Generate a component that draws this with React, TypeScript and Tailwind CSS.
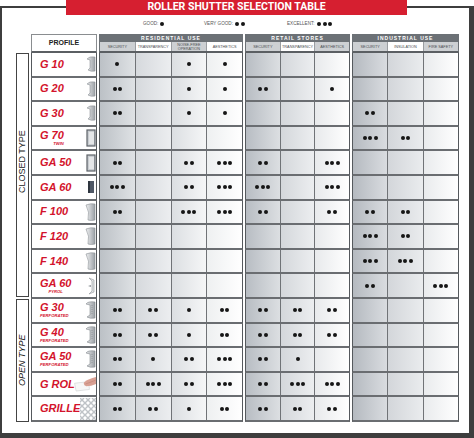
import React from 'react';

type Icon = 'slat' | 'box' | 'dark' | 'tall' | 'pyrol' | 'perf' | 'hand' | 'grille';

type Row = {
  name: string;
  sub?: string;
  subAlign?: 'left' | 'center' | 'right';
  icon: Icon;
  dots: number[];
};

const closedRows: Row[] = [
  { name: 'G 10', icon: 'slat', dots: [1, 0, 1, 1, 0, 0, 0, 0, 0, 0] },
  { name: 'G 20', icon: 'slat', dots: [2, 0, 1, 1, 2, 0, 1, 0, 0, 0] },
  { name: 'G 30', icon: 'slat', dots: [2, 0, 1, 1, 0, 0, 0, 2, 0, 0] },
  { name: 'G 70', sub: 'TWIN', subAlign: 'right', icon: 'box', dots: [0, 0, 0, 0, 0, 0, 0, 3, 2, 0] },
  { name: 'GA 50', icon: 'box', dots: [2, 0, 2, 3, 2, 0, 3, 0, 0, 0] },
  { name: 'GA 60', icon: 'dark', dots: [3, 0, 2, 3, 3, 0, 3, 0, 0, 0] },
  { name: 'F 100', icon: 'tall', dots: [2, 0, 3, 3, 2, 0, 2, 2, 2, 0] },
  { name: 'F 120', icon: 'tall', dots: [0, 0, 0, 0, 0, 0, 0, 3, 2, 0] },
  { name: 'F 140', icon: 'tall', dots: [0, 0, 0, 0, 0, 0, 0, 3, 3, 0] },
  { name: 'GA 60', sub: 'PYROL', subAlign: 'center', icon: 'pyrol', dots: [0, 0, 0, 0, 0, 0, 0, 2, 0, 3] },
];

const openRows: Row[] = [
  { name: 'G 30', sub: 'PERFORATED', subAlign: 'left', icon: 'perf', dots: [2, 2, 1, 2, 2, 2, 2, 0, 0, 0] },
  { name: 'G 40', sub: 'PERFORATED', subAlign: 'left', icon: 'perf', dots: [2, 2, 1, 2, 2, 2, 2, 0, 0, 0] },
  { name: 'GA 50', sub: 'PERFORATED', subAlign: 'left', icon: 'perf', dots: [2, 1, 2, 3, 2, 1, 0, 0, 0, 0] },
  { name: 'G ROL', icon: 'hand', dots: [2, 3, 2, 3, 2, 3, 3, 0, 0, 0] },
  { name: 'GRILLE', icon: 'grille', dots: [2, 2, 1, 2, 2, 2, 2, 0, 0, 0] },
];

const allRows = [...closedRows, ...openRows];

const groups = [
  {
    title: 'RESIDENTIAL USE',
    width: 'w-[144px]',
    start: 0,
    cols: ['SECURITY', 'TRANSPARENCY', 'NOISE-FREE OPERATION', 'AESTHETICS'],
    shades: [
      'bg-linear-to-r from-[#bcc1c6] to-[#dfe2e5]',
      'bg-linear-to-r from-[#d6d9dd] to-[#eceef0]',
      'bg-linear-to-r from-[#dcdfe2] to-[#f5f6f7]',
      'bg-linear-to-r from-[#eef0f1] to-white',
    ],
  },
  {
    title: 'RETAIL STORES',
    width: 'w-[105px]',
    start: 4,
    cols: ['SECURITY', 'TRANSPARENCY', 'AESTHETICS'],
    shades: [
      'bg-linear-to-r from-[#b8bdc3] to-[#dcdfe2]',
      'bg-linear-to-r from-[#d4d7db] to-[#eceef0]',
      'bg-linear-to-r from-[#e8eaec] to-white',
    ],
  },
  {
    title: 'INDUSTRIAL USE',
    width: 'w-[107px]',
    start: 7,
    cols: ['SECURITY', 'INSULATION', 'FIRE SAFETY'],
    shades: [
      'bg-linear-to-r from-[#b5bac0] to-[#d9dce0]',
      'bg-linear-to-r from-[#d3d6da] to-[#eaecee]',
      'bg-linear-to-r from-[#e9ebed] to-white',
    ],
  },
];

const subheadBg = ['bg-[#cdd0d3]', 'bg-white', 'bg-[#cdd0d3]', 'bg-white'];

function Dots({ count }: { count: number }) {
  return (
    <>
      {Array.from({ length: count }).map((_, i) => (
        <span key={i} className="block h-[4px] w-[4px] rounded-full bg-[#161616]" />
      ))}
    </>
  );
}

function ProfileIcon({ kind }: { kind: Icon }) {
  if (kind === 'grille') {
    const steps = [-24, -18, -12, -6, 0, 6, 12, 18, 24];
    return (
      <svg width="22" height="22" viewBox="0 0 22 22" className="shrink-0">
        {steps.map((k) => (
          <g key={k}>
            <line x1={k} y1={0} x2={k + 22} y2={22} stroke="#bfc3c7" strokeWidth="1.4" />
            <line x1={k + 22} y1={0} x2={k} y2={22} stroke="#bfc3c7" strokeWidth="1.4" />
          </g>
        ))}
      </svg>
    );
  }
  if (kind === 'hand') {
    return (
      <svg width="25" height="18" viewBox="0 0 32 20" className="-ml-[2px] shrink-0">
        <path d="M2 9 L20 7 L21 17 L4 19 Z" fill="#f7f7f7" stroke="#c8cbce" strokeWidth="0.7" />
        <path d="M14 8 Q20 3 30 1 L31 9 Q24 13 17 13 Q13 12 14 8 Z" fill="#d9a093" />
        <path d="M16 10 Q22 8 29 5" stroke="#b97a6e" strokeWidth="0.6" fill="none" />
      </svg>
    );
  }
  if (kind === 'dark') {
    return (
      <svg width="10" height="14" viewBox="0 0 10 14" className="shrink-0">
        <rect x="2" y="1" width="6" height="12" fill="#4f5866" />
        <rect x="2" y="1" width="2" height="12" fill="#2f3640" />
      </svg>
    );
  }
  if (kind === 'box') {
    return (
      <svg width="11" height="18" viewBox="0 0 11 18" className="shrink-0">
        <rect x="2" y="1" width="8" height="16" fill="#c9cdd1" stroke="#5d6268" strokeWidth="1.2" />
        <rect x="4" y="3" width="5" height="12" fill="#e4e6e8" />
      </svg>
    );
  }
  if (kind === 'tall') {
    return (
      <svg width="11" height="18" viewBox="0 0 11 18" className="shrink-0">
        <defs>
          <linearGradient id="tallG" x1="0" x2="1">
            <stop offset="0" stopColor="#f0f1f2" />
            <stop offset="1" stopColor="#9aa0a6" />
          </linearGradient>
        </defs>
        <path d="M1 2 Q6 0 10 1 L10 17 Q6 18 3 17 Q5 9 1 2 Z" fill="url(#tallG)" stroke="#8c9196" strokeWidth="0.6" />
      </svg>
    );
  }
  if (kind === 'pyrol') {
    return (
      <svg width="10" height="18" viewBox="0 0 10 18" className="shrink-0">
        <path d="M3 1 L6 4 L6 14 L3 17 L8 15 L8 3 Z" fill="#e3e5e7" stroke="#8e9398" strokeWidth="0.6" />
        <path d="M2 9 L5 8 L5 10 Z" fill="#8e9398" />
      </svg>
    );
  }
  if (kind === 'perf') {
    return (
      <svg width="11" height="18" viewBox="0 0 11 18" className="shrink-0">
        <defs>
          <linearGradient id="perfG" x1="0" x2="1">
            <stop offset="0" stopColor="#e4e6e8" />
            <stop offset="1" stopColor="#9ba0a5" />
          </linearGradient>
        </defs>
        <path d="M1 3 Q3 0 10 1 L10 17 Q5 18 2 16 L5 14 L5 4 Z" fill="url(#perfG)" stroke="#858a8f" strokeWidth="0.6" />
        <line x1="7" y1="4" x2="7" y2="14" stroke="#7b8085" strokeWidth="0.6" strokeDasharray="1 1" />
      </svg>
    );
  }
  return (
    <svg width="10" height="16" viewBox="0 0 10 16" className="shrink-0">
      <defs>
        <linearGradient id="slatG" x1="0" x2="1">
          <stop offset="0" stopColor="#e6e8ea" />
          <stop offset="1" stopColor="#9ca1a6" />
        </linearGradient>
      </defs>
      <path d="M1 3 Q3 0 9 1 L9 15 Q5 16 2 14 L4 12 L4 4 Z" fill="url(#slatG)" stroke="#8d9297" strokeWidth="0.6" />
    </svg>
  );
}

function ProfileCell({ row }: { row: Row }) {
  const align =
    row.subAlign === 'right' ? 'self-end' : row.subAlign === 'center' ? 'self-center' : 'self-start';
  return (
    <div className="flex h-[24.6px] items-center justify-between overflow-hidden border-x border-b-2 border-x-[#55595d] border-b-[#6a6d71] bg-white pl-[8px]">
      <div className="flex shrink-0 flex-col">
        <span className="whitespace-nowrap text-[11px] font-bold italic leading-[11px] text-[#d3132c]">{row.name}</span>
        {row.sub ? (
          <span className={`${align} text-[4.2px] font-bold italic leading-[5px] text-[#d3132c]`}>{row.sub}</span>
        ) : null}
      </div>
      <ProfileIcon kind={row.icon} />
    </div>
  );
}

function GroupColumn({ group }: { group: (typeof groups)[number] }) {
  const last = group.cols.length - 1;
  return (
    <div className={`ml-[2px] flex flex-col ${group.width}`}>
      <div className="flex h-[8px] items-center justify-center bg-[#6c7176] text-[5px] font-bold leading-none tracking-[1px] text-white">
        {group.title}
      </div>
      <div className="flex h-[11px] border-x border-b-2 border-x-[#6c7176] border-b-[#5b5f63]">
        {group.cols.map((col, i) => (
          <div
            key={col}
            className={`flex flex-1 items-center justify-center text-center text-[3.8px] leading-[4px] text-[#4a4d50] ${subheadBg[i]} ${
              i < last ? 'border-r border-[#9a9da1]' : ''
            }`}
          >
            {col === 'NOISE-FREE OPERATION' ? (
              <span>
                NOISE-FREE
                <br />
                OPERATION
              </span>
            ) : (
              col
            )}
          </div>
        ))}
      </div>
      {allRows.map((row, r) => (
        <div
          key={r}
          className="flex h-[24.6px] border-x border-b-2 border-x-[#55595d] border-b-[#6a6d71]"
        >
          {group.cols.map((col, i) => (
            <div
              key={col}
              className={`flex flex-1 items-center justify-center gap-[1.5px] ${group.shades[i]} ${
                i < last ? 'border-r border-[#707377]' : ''
              }`}
            >
              <Dots count={row.dots[group.start + i]} />
            </div>
          ))}
        </div>
      ))}
    </div>
  );
}

export default function App() {
  return (
    <div className="relative h-[438px] w-[474px] overflow-hidden bg-white font-['Liberation_Sans',Arial,sans-serif]">
      <div className="mt-[6px] h-[432px] border-b-[5px] border-l-2 border-r-[5px] border-t-2 border-[#3e3e3e] pl-[14px]">
        <div className="mb-[6px] mt-[12px] flex h-[8px] items-center pl-[127px] text-[4.6px] text-[#555]">
          <div className="flex w-[61px] items-center gap-[2px]">
            <span>GOOD:</span>
            <Dots count={1} />
          </div>
          <div className="flex w-[83px] items-center gap-[1.5px]">
            <span className="mr-[1px]">VERY GOOD:</span>
            <Dots count={2} />
          </div>
          <div className="flex items-center gap-[1.5px]">
            <span className="mr-[1px]">EXCELLENT:</span>
            <Dots count={3} />
          </div>
        </div>

        <div className="flex">
          <div className="mt-[19px] flex w-[13px] flex-col">
            <div className="flex h-[244px] items-center justify-center border border-[#444] pt-[26px] text-[9px] leading-none text-[#222] [writing-mode:vertical-rl] rotate-180">
              CLOSED TYPE
            </div>
            <div className="mt-[2px] flex h-[123px] items-center justify-center border border-[#444] text-[9px] italic leading-none text-[#222] [writing-mode:vertical-rl] rotate-180">
              OPEN TYPE
            </div>
          </div>

          <div className="ml-[2px] flex w-[66px] flex-col">
            <div className="flex h-[19px] items-center justify-center border border-b-2 border-[#8a8d90] border-b-[#5b5f63] text-[7px] font-bold text-[#222]">
              PROFILE
            </div>
            {allRows.map((row, r) => (
              <ProfileCell key={r} row={row} />
            ))}
          </div>

          {groups.map((g) => (
            <GroupColumn key={g.title} group={g} />
          ))}
        </div>
      </div>

      <div className="absolute left-[66px] top-0 flex h-[15px] w-[341px] items-center justify-center bg-[#d61f30] font-['Roboto',sans-serif] text-[10.5px] font-bold leading-none text-white">
        ROLLER SHUTTER SELECTION TABLE
      </div>
    </div>
  );
}
